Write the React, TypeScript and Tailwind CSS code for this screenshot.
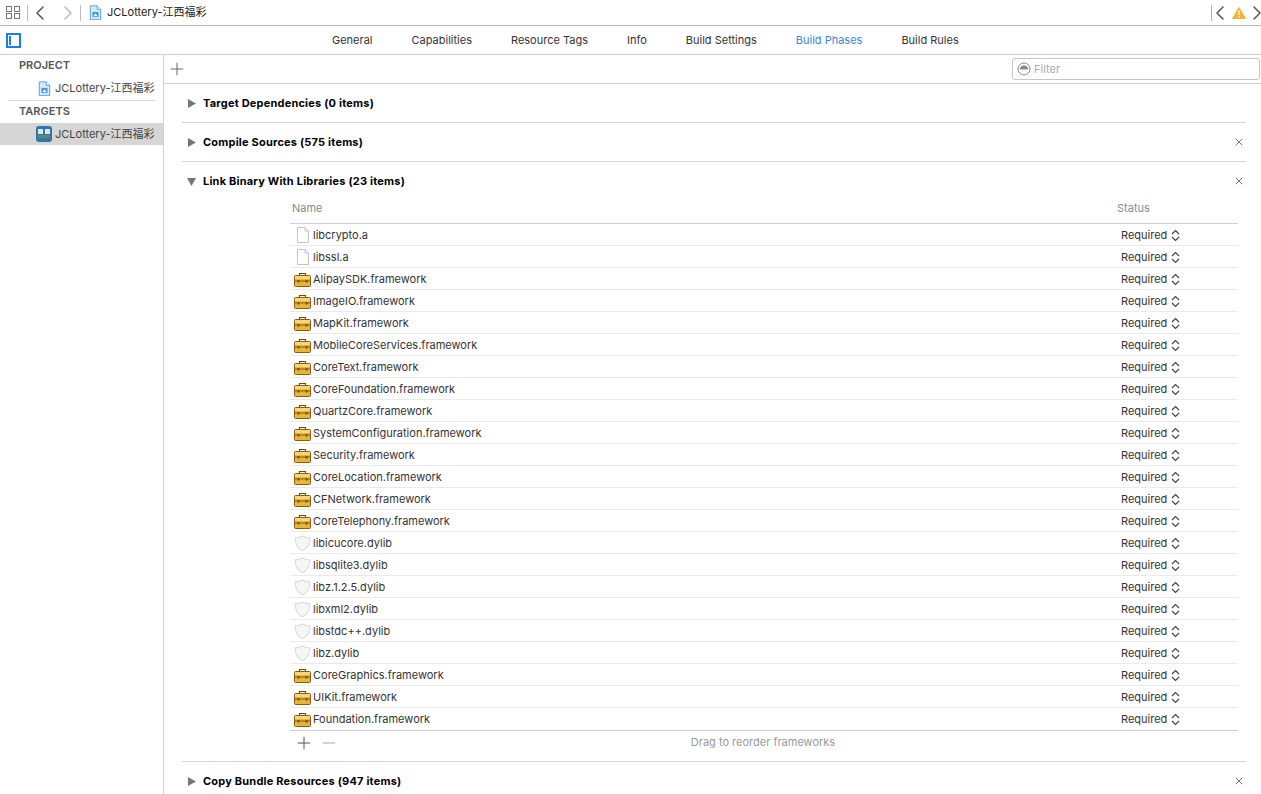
import { ChevronLeft, ChevronRight, Plus, Minus, X } from "lucide-react"

const font = "font-['Inter','Noto_Sans_CJK_SC',sans-serif]"

const tabs = ["General", "Capabilities", "Resource Tags", "Info", "Build Settings", "Build Phases", "Build Rules"]

const libs: [string, "file" | "fw" | "dylib"][] = [
  ["libcrypto.a", "file"],
  ["libssl.a", "file"],
  ["AlipaySDK.framework", "fw"],
  ["ImageIO.framework", "fw"],
  ["MapKit.framework", "fw"],
  ["MobileCoreServices.framework", "fw"],
  ["CoreText.framework", "fw"],
  ["CoreFoundation.framework", "fw"],
  ["QuartzCore.framework", "fw"],
  ["SystemConfiguration.framework", "fw"],
  ["Security.framework", "fw"],
  ["CoreLocation.framework", "fw"],
  ["CFNetwork.framework", "fw"],
  ["CoreTelephony.framework", "fw"],
  ["libicucore.dylib", "dylib"],
  ["libsqlite3.dylib", "dylib"],
  ["libz.1.2.5.dylib", "dylib"],
  ["libxml2.dylib", "dylib"],
  ["libstdc++.dylib", "dylib"],
  ["libz.dylib", "dylib"],
  ["CoreGraphics.framework", "fw"],
  ["UIKit.framework", "fw"],
  ["Foundation.framework", "fw"],
]

function FileIcon() {
  return (
    <svg width="16" height="18" viewBox="0 0 16 18" fill="none">
      <path d="M2.5 1.5h7.5l3.5 3.5v11.5h-11z" fill="#fff" stroke="#c4c4c4" />
      <path d="M10 1.5v3.5h3.5" stroke="#c4c4c4" />
    </svg>
  )
}

function ToolboxIcon() {
  return (
    <svg width="17" height="15" viewBox="0 0 17 15" fill="none">
      <path d="M5.5 3.5v-2h6v2" stroke="#6d4a12" strokeWidth="1.2" />
      <rect x="0.5" y="3.5" width="16" height="11" rx="1" fill="#e8b53a" stroke="#8a5d14" />
      <rect x="1" y="4" width="15" height="3" fill="#f6d676" />
      <path d="M1 9h15" stroke="#8a5d14" />
      <rect x="3.5" y="8" width="2" height="2.5" fill="#7a5212" />
      <rect x="11.5" y="8" width="2" height="2.5" fill="#7a5212" />
    </svg>
  )
}

function ShieldIcon() {
  return (
    <svg width="17" height="17" viewBox="0 0 16 16" fill="none">
      <path d="M8 1c2 1.200 4.500 1.700 7 1.700 0 5.800-1.800 9.800-7 12.300-5.200-2.500-7-6.500-7-12.300 2.500 0 5-.5 7-1.700z" fill="#f6f6f6" stroke="#dcdcdc" />
    </svg>
  )
}

function ProjectIcon({ size = 16 }: { size?: number }) {
  return (
    <svg width={size} height={size * 1.2} viewBox="0 0 15 18" fill="none">
      <path d="M1.500 1h8l4 4v12h-12z" fill="#d6ebfb" stroke="#3f97e0" />
      <path d="M9.500 1v4h4" fill="#fff" stroke="#3f97e0" />
      <rect x="4" y="8" width="7" height="6" fill="#3f97e0" />
      <path d="M5 13l2.500-3.500 2.500 3.500z" fill="#fff" />
    </svg>
  )
}

function AppIcon() {
  return (
    <svg width="16" height="16" viewBox="0 0 16 16">
      <rect width="16" height="16" rx="3" fill="#2f74ad" />
      <rect x="2" y="3" width="5" height="5" fill="#d6e6f2" />
      <rect x="9" y="3" width="5" height="5" fill="#d6e6f2" />
      <rect x="2" y="9" width="12" height="3" fill="#5d8a6a" />
    </svg>
  )
}

function Updown() {
  return (
    <svg width="9" height="13" viewBox="0 0 9 13" fill="none" stroke="#444" strokeWidth="1.200">
      <path d="M1 5l3.500-3.500L8 5" />
      <path d="M1 8l3.500 3.500L8 8" />
    </svg>
  )
}

function Triangle({ open }: { open?: boolean }) {
  return (
    <svg width="9" height="9" viewBox="0 0 9 9" fill="#777">
      {open ? <path d="M0 1h9L4.500 9z" /> : <path d="M1 0l8 4.500L1 9z" />}
    </svg>
  )
}

function PhaseHeader({ title, open, close = true }: { title: string; open?: boolean; close?: boolean }) {
  return (
    <div className="h-[38px] flex items-center pl-[5px]">
      <Triangle open={open} />
      <span className="ml-[7px] text-[11px] font-bold text-black flex-1 tracking-[0.2px]">{title}</span>
      {close && <X size={12} strokeWidth={2} className="text-[#777] mr-[1px]" />}
    </div>
  )
}

export default function App() {
  return (
    <div className={`w-[1261px] h-[794px] overflow-hidden bg-white flex flex-col ${font}`}>
      {/* jump bar */}
      <div className="h-[26px] shrink-0 border-b border-[#b4b4b4] flex items-center bg-white">
        <div className="w-[25px] flex justify-end pr-[5px]">
          <svg width="14" height="13" viewBox="0 0 14 13" fill="none" stroke="#777">
            <rect x="0.500" y="0.500" width="5" height="5" />
            <rect x="8.500" y="0.500" width="5" height="5" />
            <rect x="0.500" y="7.500" width="5" height="5" />
            <rect x="8.500" y="7.500" width="5" height="5" />
          </svg>
        </div>
        <div className="w-px h-[16px] bg-[#bbb] ml-[2px]" />
        <ChevronLeft size={24} strokeWidth={1.500} className="text-[#555] shrink-0" />
        <ChevronRight size={24} strokeWidth={1.500} className="text-[#bbb] ml-[4px] shrink-0" />
        <div className="w-px h-[16px] bg-[#bbb]" />
        <div className="ml-[8px]"><ProjectIcon size={13} /></div>
        <span className="ml-[5px] text-[11px] text-[#222]">JCLottery-江西福彩</span>
        <div className="flex-1" />
        <div className="w-px h-[16px] bg-[#aaa]" />
        <ChevronLeft size={24} strokeWidth={1.500} className="text-[#555] -ml-[4px] shrink-0" />
        <svg width="14" height="12" viewBox="0 0 14 12" className="shrink-0">
          <path d="M7 0.500L13.500 11.500H0.500z" fill="#fdb32b" stroke="#fdb32b" strokeLinejoin="round" />
          <rect x="6.300" y="3.500" width="1.400" height="4.500" fill="#fff" />
          <rect x="6.300" y="9" width="1.400" height="1.400" fill="#fff" />
        </svg>
        <ChevronRight size={24} strokeWidth={1.500} className="text-[#555] -ml-[1px] -mr-[8px] shrink-0" />
      </div>

      {/* editor tabs */}
      <div className="h-[29px] shrink-0 border-b border-[#cfcfcf] flex items-center relative">
        <div className="absolute left-[6px] top-[7px] w-[15px] h-[15px] border-2 border-[#1b7cf2] flex">
          <div className="w-[2px] ml-[1px] my-[1px] bg-[#1b7cf2]" />
        </div>
        <div className="flex ml-[332px] gap-[39px] text-[11px] text-[#333]">
          {tabs.map((t) => (
            <span key={t} className={t === "Build Phases" ? "text-[#3b86d8]" : ""}>{t}</span>
          ))}
        </div>
      </div>

      <div className="flex flex-1 min-h-0">
        {/* sidebar */}
        <div className="w-[164px] shrink-0 border-r border-[#cfcfcf] text-[11px]">
          <div className="h-[22px] flex items-center pb-[2px] pl-[19px] font-semibold text-[#555]">PROJECT</div>
          <div className="h-[23px] flex items-center pl-[38px] text-[#444]">
            <ProjectIcon size={13} />
            <span className="ml-[4px] whitespace-nowrap">JCLottery-江西福彩</span>
          </div>
          <div className="h-px bg-[#ddd] mx-[8px]" />
          <div className="h-[22px] flex items-center pb-[2px] pl-[19px] font-semibold text-[#555]">TARGETS</div>
          <div className="h-[22px] flex items-center pl-[36px] text-[#444] bg-[#d6d6d6]">
            <AppIcon />
            <span className="ml-[3px] whitespace-nowrap">JCLottery-江西福彩</span>
          </div>
        </div>

        {/* build phases */}
        <div className="flex-1 min-w-0 flex flex-col">
          <div className="h-[29px] shrink-0 border-b border-[#cfcfcf] flex items-center pl-[3px] pr-[1px]">
            <Plus size={20} strokeWidth={1.200} className="text-[#666]" />
            <div className="flex-1" />
            <div className="w-[248px] h-[22px] rounded-[3px] border border-[#c6c6c6] flex items-center pl-[4px]">
              <svg width="14" height="14" viewBox="0 0 14 14">
                <circle cx="7" cy="7" r="6" fill="none" stroke="#888" />
                <path d="M3 7.500a4 4 0 0 1 8 0z" fill="#888" />
              </svg>
              <span className="ml-[3px] text-[11px] text-[#aaa]">Filter</span>
            </div>
          </div>

          <div className="pl-[18px] pr-[15px] flex-1 min-h-0 overflow-hidden">
            <PhaseHeader title="Target Dependencies (0 items)" close={false} />
            <div className="h-px bg-[#d4d4d4]" />
            <PhaseHeader title="Compile Sources (575 items)" />
            <div className="h-px bg-[#d4d4d4]" />
            <PhaseHeader title="Link Binary With Libraries (23 items)" open />

            <div className="ml-[108px] mr-[8px] -mt-[1px] text-[11px]">
              <div className="h-[25px] flex items-center border-b border-[#cfcfcf] pl-[2px] pb-[6px] text-[#8a8a8a]">
                <span className="flex-1">Name</span>
                <span className="w-[121px]">Status</span>
              </div>
              {libs.map(([name, kind], i) => (
                <div
                  key={name}
                  className={`flex items-center border-b pt-[1px] text-[#333] ${i === libs.length - 1 ? "h-[23px] border-[#cfcfcf]" : "h-[22px] border-[#eaeaea]"}`}
                >
                  <div className="w-[23px] flex justify-center pl-[2px] shrink-0">
                    {kind === "file" && <FileIcon />}
                    {kind === "fw" && <ToolboxIcon />}
                    {kind === "dylib" && <ShieldIcon />}
                  </div>
                  <span className="flex-1">{name}</span>
                  <span className="w-[117px] flex items-center gap-[4px]">Required <Updown /></span>
                </div>
              ))}
              <div className="h-[23px] flex items-center">
                <Plus size={20} strokeWidth={1.200} className="text-[#555] ml-[4px]" />
                <Minus size={20} strokeWidth={1.200} className="text-[#aaa] ml-[5px]" />
                <span className="flex-1 text-center text-[#999] -ml-[51px]">Drag to reorder frameworks</span>
              </div>
            </div>

            <div className="h-px bg-[#d4d4d4] mt-[7px]" />
            <PhaseHeader title="Copy Bundle Resources (947 items)" />
          </div>
        </div>
      </div>
    </div>
  )
}
